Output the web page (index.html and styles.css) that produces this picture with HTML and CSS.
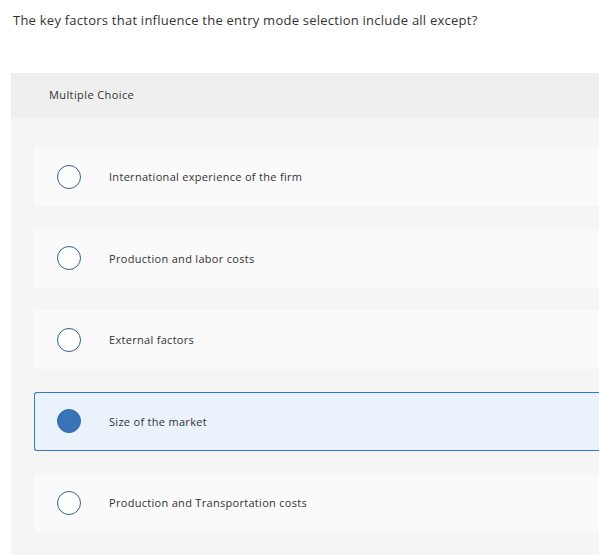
FILE: index.html
```html
<!DOCTYPE html>
<html lang="en">
<head>
    <meta charset="UTF-8">
    <meta name="viewport" content="width=device-width, initial-scale=1.0">
    <title>Question</title>
    <link rel="stylesheet" href="styles.css">
</head>
<body>
    <p class="question">The key factors that influence the entry mode selection include all except?</p>
    <div class="quiz">
        <div class="quiz-head">Multiple Choice</div>
        <div class="choices">
            <label class="choice">
                <span class="radio"></span>
                <span class="choice-text">International experience of the firm</span>
            </label>
            <label class="choice">
                <span class="radio"></span>
                <span class="choice-text">Production and labor costs</span>
            </label>
            <label class="choice">
                <span class="radio"></span>
                <span class="choice-text">External factors</span>
            </label>
            <label class="choice selected">
                <span class="radio"></span>
                <span class="choice-text">Size of the market</span>
            </label>
            <label class="choice">
                <span class="radio"></span>
                <span class="choice-text">Production and Transportation costs</span>
            </label>
        </div>
    </div>
</body>
</html>
```

FILE: styles.css
```css
body {
    margin: 0;
    padding: 0;
    font-family: 'Open Sans', 'Liberation Sans', sans-serif;
    color: #333;
    background: #fff;
    overflow: hidden;
}
.question {
    margin: 0;
    padding: 12px 0 0 13px;
    font-size: 13px;
    line-height: 16px;
    letter-spacing: 0.24px;
}
.quiz {
    margin: 45px 0 0 11px;
    background: #f5f5f5;
    height: 482px;
}
.quiz-head {
    background: #efefef;
    height: 45px;
    line-height: 44px;
    padding-left: 38px;
    font-size: 11px;
    letter-spacing: 0.4px;
}
.choices {
    display: flex;
    flex-direction: column;
    gap: 22.5px;
    padding: 29px 0 0 23px;
}
.choice {
    display: flex;
    align-items: center;
    height: 59px;
    background: #fafafa;
    border: 1px solid #fafafa;
    border-right: none;
    border-radius: 3px 0 0 3px;
    box-sizing: border-box;
    font-size: 11px;
    letter-spacing: 0.3px;
}
.choice.selected {
    background: #eaf2fb;
    border-color: #3579c6;
}
.radio {
    width: 22px;
    height: 22px;
    border: 1.5px solid #2f5f92;
    border-radius: 50%;
    background: #fff;
    margin-left: 22px;
    flex-shrink: 0;
}
.selected .radio {
    background: #3a74b8;
    border-color: #2f66a6;
}
.choice-text {
    margin-left: 28px;
}
```
